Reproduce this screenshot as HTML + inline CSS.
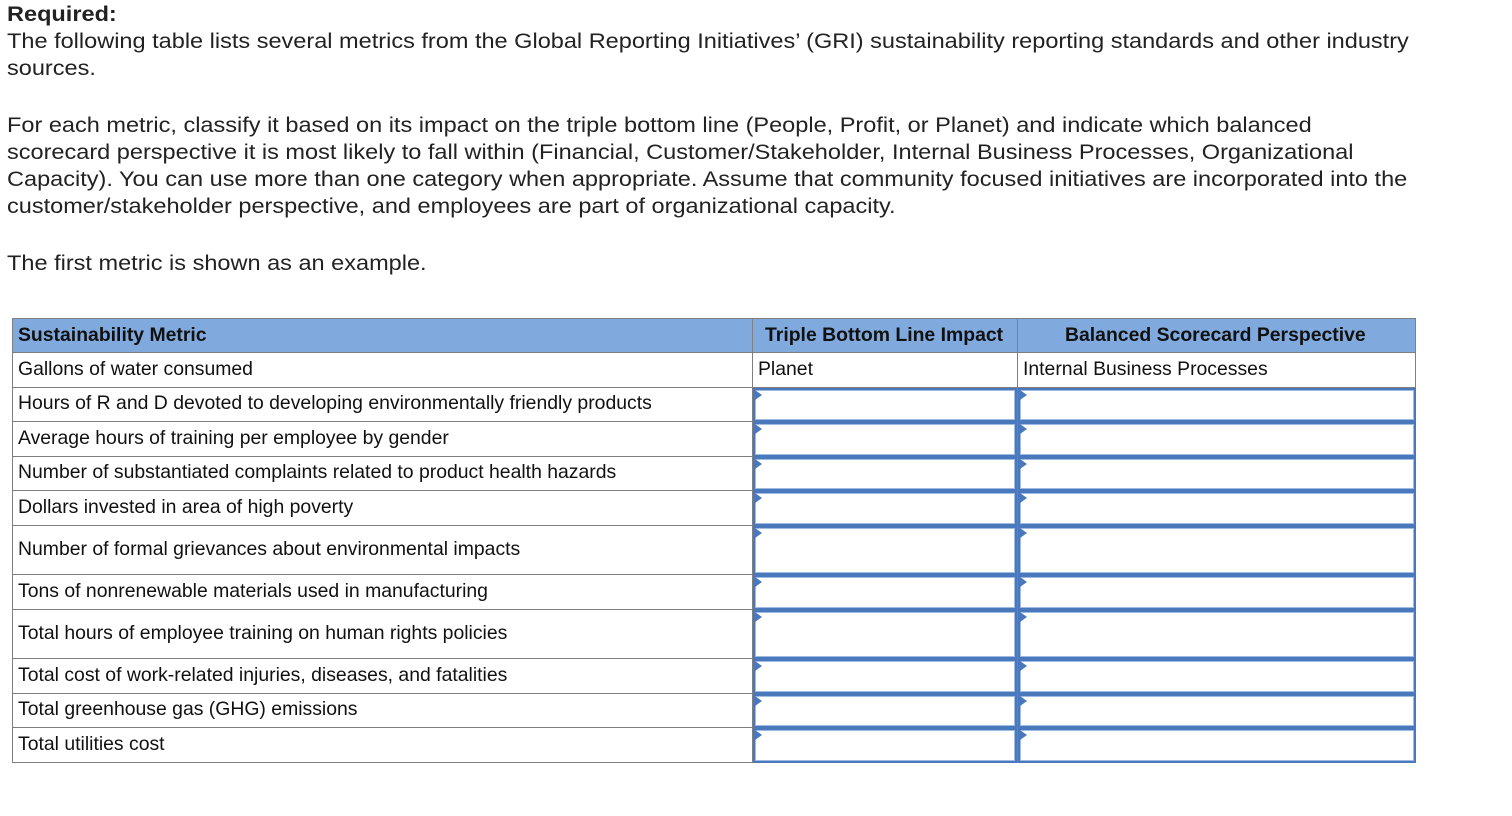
<!DOCTYPE html>
<html><head><meta charset="utf-8"><style>
*{margin:0;padding:0;box-sizing:border-box}
body{width:1512px;height:816px;background:#fff;position:relative;font-family:"Liberation Sans",Arial,sans-serif;color:#222;overflow:hidden}
.t{position:absolute;left:7px;font-size:21px;line-height:27px;white-space:nowrap;transform:scaleX(1.12);transform-origin:0 0}
.tb{position:absolute;font-size:19.4px;white-space:nowrap;color:#111}
.hl{position:absolute;height:1px;background:#7f7f7f}
.vl{position:absolute;width:1px;background:#7f7f7f}
.in{position:absolute;border:2px solid #4a78bd;box-shadow:inset 0 0 0 1px #9fbbe3}
.in:before{content:"";position:absolute;left:0;top:0;border-left:7px solid #4a78bd;border-top:5px solid transparent;border-bottom:5px solid transparent}
</style></head><body>
<div class="t" style="top:1px;font-weight:bold">Required:</div>
<div class="t" style="top:28px">The following table lists several metrics from the Global Reporting Initiatives’ (GRI) sustainability reporting standards and other industry</div>
<div class="t" style="top:55px">sources.</div>
<div class="t" style="top:112px">For each metric, classify it based on its impact on the triple bottom line (People, Profit, or Planet) and indicate which balanced</div>
<div class="t" style="top:139px">scorecard perspective it is most likely to fall within (Financial, Customer/Stakeholder, Internal Business Processes, Organizational</div>
<div class="t" style="top:166px">Capacity). You can use more than one category when appropriate. Assume that community focused initiatives are incorporated into the</div>
<div class="t" style="top:193px">customer/stakeholder perspective, and employees are part of organizational capacity.</div>
<div class="t" style="top:250px">The first metric is shown as an example.</div>

<div style="position:absolute;left:12px;top:318px;width:1404px;height:34px;background:#80aade"></div>
<div class="tb" style="left:18px;top:324px;font-weight:bold">Sustainability Metric</div>
<div class="tb" style="left:765px;top:324px;font-weight:bold">Triple Bottom Line Impact</div>
<div class="tb" style="left:1065px;top:324px;font-weight:bold">Balanced Scorecard Perspective</div>

<div class="hl" style="left:12px;top:318px;width:1404px"></div>
<div class="hl" style="left:12px;top:352px;width:1404px"></div>
<div class="vl" style="left:12px;top:318px;height:445px"></div>
<div class="vl" style="left:752px;top:318px;height:445px"></div>
<div class="vl" style="left:1017px;top:318px;height:445px"></div>
<div class="vl" style="left:1415px;top:318px;height:70px"></div>

<div class="tb" style="left:18px;top:358px">Gallons of water consumed</div>
<div class="tb" style="left:758px;top:358px">Planet</div>
<div class="tb" style="left:1023px;top:358px">Internal Business Processes</div>
<div class="hl" style="left:12px;top:387px;width:1404px"></div>

<div id="rows"></div>
<script>
var b=[387,421,456,490,525,574,609,658,693,727,762];
var n=["Hours of R and D devoted to developing environmentally friendly products","Average hours of training per employee by gender","Number of substantiated complaints related to product health hazards","Dollars invested in area of high poverty","Number of formal grievances about environmental impacts","Tons of nonrenewable materials used in manufacturing","Total hours of employee training on human rights policies","Total cost of work-related injuries, diseases, and fatalities","Total greenhouse gas (GHG) emissions","Total utilities cost"];
var h="";
for(var i=0;i<10;i++){var t=b[i],e=b[i+1],m=(t+e)/2;
h+='<div class="tb" style="left:18px;top:'+(m-12)+'px">'+n[i]+'</div>';
h+='<div class="hl" style="left:12px;top:'+e+'px;width:742px"></div>';
h+='<div class="in" style="left:753px;top:'+(t+1)+'px;width:264px;height:'+(e-t)+'px"></div>';
h+='<div class="in" style="left:1018px;top:'+(t+1)+'px;width:398px;height:'+(e-t)+'px"></div>';}
document.getElementById("rows").innerHTML=h;
</script>
</body></html>
